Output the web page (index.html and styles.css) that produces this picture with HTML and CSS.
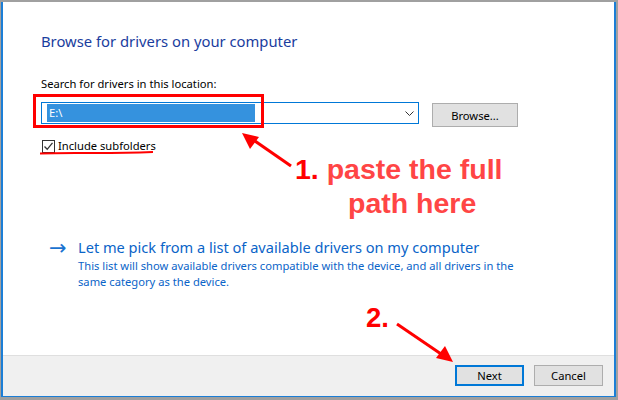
FILE: index.html
```html
<!DOCTYPE html>
<html>
<head>
<meta charset="utf-8">
<link rel="stylesheet" href="styles.css">
</head>
<body>
<div class="window">
  <div class="content">
    <h1 class="title">Browse for drivers on your computer</h1>
    <div class="label">Search for drivers in this location:</div>
    <div class="pathrow">
      <div class="combo">
        <span class="sel">E:\</span>
        <svg class="chev" width="9" height="5" viewBox="0 0 9 5"><path d="M0.5 0.5 L4.5 4.5 L8.5 0.5" fill="none" stroke="#333" stroke-width="1"/></svg>
      </div>
      <button class="btn browse">Browse...</button>
    </div>
    <label class="check">
      <span class="box"><svg width="11" height="11" viewBox="0 0 11 11"><path d="M1.5 5.5 L4.2 8.3 L9.5 1.8" fill="none" stroke="#333" stroke-width="1.3"/></svg></span>
      <span>Include subfolders</span>
    </label>
    <div class="pick">
      <div class="pickhead"><span class="arrow">&#8594;</span><span class="picktitle">Let me pick from a list of available drivers on my computer</span></div>
      <div class="pickdesc">This list will show available drivers compatible with the device, and all drivers in the<br>same category as the device.</div>
    </div>
  </div>
  <div class="footer">
    <button class="btn next">Next</button>
    <button class="btn cancel">Cancel</button>
  </div>
</div>

<div class="redbox"></div>
<div class="note note1"><span class="num">1.</span> paste the full<br><span class="l2">path here</span></div>
<div class="note note2">2.</div>
<svg class="marks" width="618" height="400" viewBox="0 0 618 400">
  <path d="M40 153.5 C 70 152, 100 154, 153 152" fill="none" stroke="#f00" stroke-width="2"/>
  <line x1="291" y1="166" x2="252" y2="139" stroke="#f00" stroke-width="3"/>
  <polygon points="242,133 259,137 250,149" fill="#f00"/>
  <line x1="397" y1="324" x2="444" y2="356" stroke="#f00" stroke-width="3"/>
  <polygon points="453,362 436,358 445,346" fill="#f00"/>
</svg>
</body>
</html>
```
FILE: styles.css
```css
* { box-sizing: border-box; }
html, body { margin: 0; padding: 0; }
body {
  width: 618px;
  height: 400px;
  background: #a0a0a0;
  position: relative;
  overflow: hidden;
  font-family: "Noto Sans", "DejaVu Sans", sans-serif;
}
.window {
  margin: 2px 0 0 1px;
  width: 615px;
  height: 395px;
  background: #fff;
  border-left: 2px solid #1c7ed6;
  border-right: 2px solid #1c7ed6;
  border-bottom: 1px solid #1c7ed6;
  display: flex;
  flex-direction: column;
}
.content {
  flex: 1;
  padding: 28px 0 0 38px;
}
.title {
  margin: 0;
  font-size: 14.8px;
  line-height: 22px;
  font-weight: normal;
  color: #1a3d9e;
}
.label {
  margin-top: 24px;
  font-size: 11.2px;
  line-height: 16px;
  color: #000;
}
.pathrow {
  margin-top: 10px;
  display: flex;
  align-items: flex-start;
}
.combo {
  width: 378px;
  height: 22px;
  border: 1px solid #0078d7;
  display: flex;
  align-items: center;
  padding: 0 4px 0 5px;
}
.sel {
  width: 208px;
  height: 18px;
  background: #3592de;
  color: #fff;
  font-size: 11.2px;
  line-height: 18px;
  padding-left: 2px;
}
.chev { margin-left: auto; }
.btn {
  font-family: "Noto Sans", "DejaVu Sans", sans-serif;
  font-size: 11.2px;
  color: #000;
  background: #e1e1e1;
  border: 1px solid #adadad;
  padding: 0;
}
.browse {
  margin: 1px 0 0 13px;
  width: 86px;
  height: 24px;
}
.check {
  margin-top: 12px;
  display: flex;
  align-items: center;
  gap: 3px;
  font-size: 11.2px;
  line-height: 14px;
  margin-left: 1px;
}
.box {
  width: 13px;
  height: 13px;
  border: 1px solid #333;
  display: flex;
  align-items: center;
  justify-content: center;
}
.box svg { display: block; }
.pick {
  margin-top: 83px;
  padding-left: 8px;
  color: #0a64c8;
}
.pickhead {
  display: flex;
  align-items: center;
  height: 22px;
}
.arrow {
  width: 29px;
  font-size: 21px;
  line-height: 22px;
  color: #1a73d0;
}
.picktitle {
  font-size: 14.6px;
  line-height: 22px;
}
.pickdesc {
  padding-left: 29px;
  font-size: 11.2px;
  line-height: 16px;
}
.footer {
  height: 41px;
  background: #f0f0f0;
  border-top: 1px solid #dfdfdf;
  display: flex;
  justify-content: flex-end;
  align-items: flex-start;
  gap: 10px;
  padding: 9px 11px 0 0;
}
.next, .cancel {
  width: 69px;
  height: 21px;
}
.next { border: 2px solid #0078d7; }
.redbox {
  position: absolute;
  left: 33px;
  top: 94px;
  width: 231px;
  height: 34px;
  border: 3px solid #f00;
}
.note {
  position: absolute;
  font-family: "Liberation Sans", Arial, sans-serif;
  font-weight: bold;
  font-size: 28.5px;
  line-height: 34px;
  color: #ff4545;
}
.note1 { left: 295px; top: 152px; }
.note1 .num { color: #f00; }
.note1 .l2 { margin-left: 53px; }
.note2 { left: 366px; top: 301px; font-size: 27.5px; color: #f00; }
.marks { position: absolute; left: 0; top: 0; pointer-events: none; }
```
